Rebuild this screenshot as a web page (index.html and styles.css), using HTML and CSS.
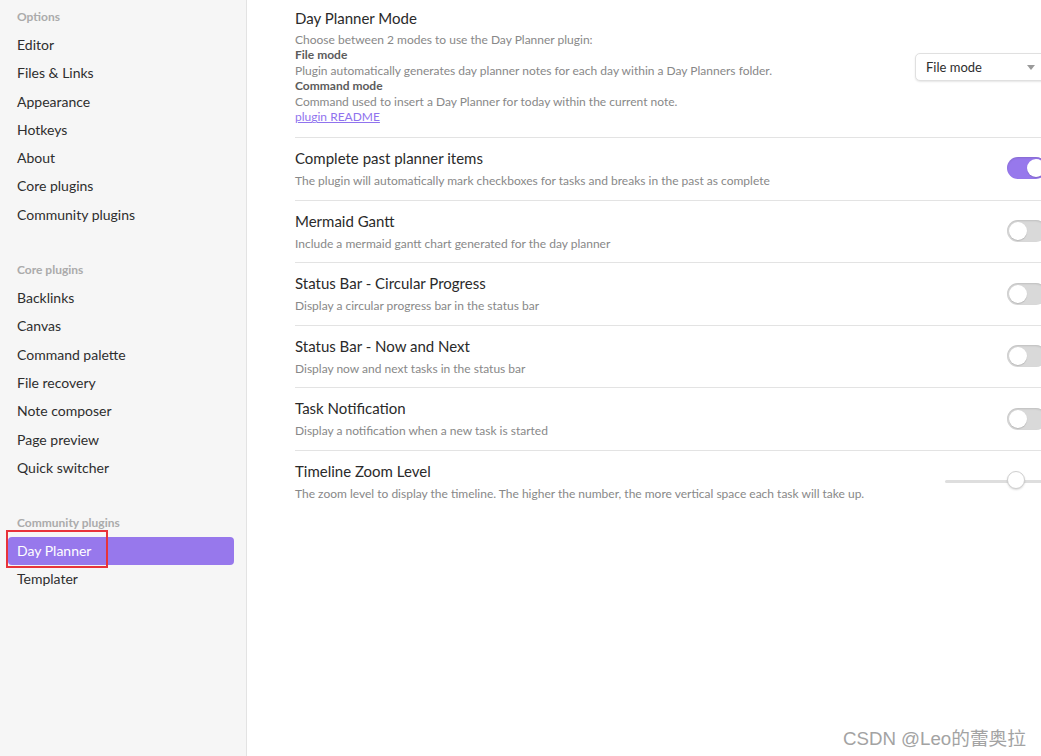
FILE: index.html
```html
<!DOCTYPE html>
<html lang="en">
<head>
  <meta charset="UTF-8">
  <meta name="viewport" content="width=device-width, initial-scale=1.0">
  <title>Settings - Day Planner</title>
  <link rel="stylesheet" href="styles.css">
</head>
<body>
  <div class="sidebar">
    <div class="nav-group">
      <div class="nav-header">Options</div>
      <div class="nav-item">Editor</div>
      <div class="nav-item">Files &amp; Links</div>
      <div class="nav-item">Appearance</div>
      <div class="nav-item">Hotkeys</div>
      <div class="nav-item">About</div>
      <div class="nav-item">Core plugins</div>
      <div class="nav-item">Community plugins</div>
    </div>
    <div class="nav-group">
      <div class="nav-header">Core plugins</div>
      <div class="nav-item">Backlinks</div>
      <div class="nav-item">Canvas</div>
      <div class="nav-item">Command palette</div>
      <div class="nav-item">File recovery</div>
      <div class="nav-item">Note composer</div>
      <div class="nav-item">Page preview</div>
      <div class="nav-item">Quick switcher</div>
    </div>
    <div class="nav-group">
      <div class="nav-header">Community plugins</div>
      <div class="nav-item active">Day Planner<span class="mark"></span></div>
      <div class="nav-item">Templater</div>
    </div>
  </div>

  <div class="main">
    <div class="setting first">
      <div class="info">
        <div class="name">Day Planner Mode</div>
        <div class="desc">
          Choose between 2 modes to use the Day Planner plugin:<br>
          <b>File mode</b><br>
          Plugin automatically generates day planner notes for each day within a Day Planners folder.<br>
          <b>Command mode</b><br>
          Command used to insert a Day Planner for today within the current note.<br>
          <a href="#">plugin README</a>
        </div>
      </div>
      <div class="control">
        <div class="dropdown">File mode<span class="caret"></span></div>
      </div>
    </div>

    <div class="setting">
      <div class="info">
        <div class="name">Complete past planner items</div>
        <div class="desc">The plugin will automatically mark checkboxes for tasks and breaks in the past as complete</div>
      </div>
      <div class="control"><div class="toggle on"><span class="knob"></span></div></div>
    </div>

    <div class="setting">
      <div class="info">
        <div class="name">Mermaid Gantt</div>
        <div class="desc">Include a mermaid gantt chart generated for the day planner</div>
      </div>
      <div class="control"><div class="toggle"><span class="knob"></span></div></div>
    </div>

    <div class="setting">
      <div class="info">
        <div class="name">Status Bar - Circular Progress</div>
        <div class="desc">Display a circular progress bar in the status bar</div>
      </div>
      <div class="control"><div class="toggle"><span class="knob"></span></div></div>
    </div>

    <div class="setting">
      <div class="info">
        <div class="name">Status Bar - Now and Next</div>
        <div class="desc">Display now and next tasks in the status bar</div>
      </div>
      <div class="control"><div class="toggle"><span class="knob"></span></div></div>
    </div>

    <div class="setting">
      <div class="info">
        <div class="name">Task Notification</div>
        <div class="desc">Display a notification when a new task is started</div>
      </div>
      <div class="control"><div class="toggle"><span class="knob"></span></div></div>
    </div>

    <div class="setting">
      <div class="info">
        <div class="name">Timeline Zoom Level</div>
        <div class="desc">The zoom level to display the timeline. The higher the number, the more vertical space each task will take up.</div>
      </div>
      <div class="control">
        <div class="slider"><span class="thumb" style="left: 62px;"></span></div>
      </div>
    </div>
  </div>

  <div class="watermark">CSDN @Leo的蕾奥拉</div>
</body>
</html>
```

FILE: styles.css
```css
body {
  margin: 0;
  padding: 0;
  height: 756px;
  display: flex;
  overflow: hidden;
  font-family: Lato, "Noto Sans", sans-serif;
  color: #2e2e2e;
  background-color: #ffffff;
}
.sidebar {
  flex: none;
  padding: 5px 12px 0 8px;
  box-sizing: content-box;
  width: 226px;
  background-color: #f6f6f6;
  border-right: 1px solid #e3e3e3;
}
.nav-group + .nav-group {
  margin-top: 29px;
}
.nav-header {
  height: 24px;
  line-height: 24px;
  padding-left: 9px;
  margin-bottom: 2px;
  font-size: 12px;
  font-weight: bold;
  color: #ababab;
}
.nav-item {
  position: relative;
  height: 28.3px;
  line-height: 28.3px;
  padding-left: 9px;
  font-size: 14px;
  color: #2e2e2e;
  border-radius: 4px;
}
.nav-item.active {
  background-color: #9778ec;
  color: #ffffff;
}
.nav-item .mark {
  position: absolute;
  left: -2px;
  top: -7px;
  width: 98px;
  height: 34px;
  border: 2px solid #e8333a;
}
.main {
  width: 752px;
  flex: none;
  padding-left: 48px;
}
.setting {
  display: flex;
  align-items: center;
  padding: 10px 0 11px 0;
  border-top: 1px solid #e3e3e3;
}
.setting.first {
  border-top: none;
  padding-top: 8px;
  padding-bottom: 12px;
}
.setting.first .desc {
  margin-top: 3.5px;
}
.info {
  flex: 1;
  margin-right: 20px;
}
.name {
  font-size: 15px;
  line-height: 20px;
  color: #2a2a2a;
}
.desc {
  margin-top: 5px;
  font-size: 12px;
  line-height: 15.6px;
  color: #888888;
}
.desc b {
  color: #5c5c5c;
  font-weight: bold;
}
.desc a {
  color: #9073ee;
  text-decoration: underline;
}
.control {
  flex: none;
  display: flex;
  justify-content: flex-end;
}
.dropdown {
  position: relative;
  height: 26px;
  line-height: 26px;
  padding-left: 10px;
  box-sizing: content-box;
  width: 120px;
  font-size: 13px;
  color: #2e2e2e;
  border: 1px solid #e0e0e0;
  border-radius: 5px;
  box-shadow: 0 1px 2px rgba(0, 0, 0, 0.1);
  background: #ffffff;
}
.caret {
  position: absolute;
  right: 11px;
  top: 11px;
  border-left: 4px solid transparent;
  border-right: 4px solid transparent;
  border-top: 5px solid #9a9a9a;
}
.toggle {
  position: relative;
  width: 40px;
  height: 22px;
  border-radius: 11px;
  background-color: #d9d9d9;
  box-shadow: inset 0 1px 2px rgba(0, 0, 0, 0.12);
}
.toggle .knob {
  position: absolute;
  left: 2px;
  top: 2px;
  width: 18px;
  height: 18px;
  border-radius: 50%;
  background: #ffffff;
  box-shadow: 0 1px 1px rgba(0, 0, 0, 0.15);
}
.toggle.on {
  background-color: #9778ec;
}
.toggle.on .knob {
  left: 20px;
}
.slider {
  position: relative;
  width: 102px;
  height: 3px;
  margin: 9px 0;
  border-radius: 2px;
  background-color: #dedede;
}
.slider .thumb {
  position: absolute;
  top: -9px;
  width: 18px;
  height: 18px;
  box-sizing: border-box;
  border-radius: 50%;
  background: #ffffff;
  border: 1px solid #cfcfcf;
  box-shadow: 0 1px 2px rgba(0, 0, 0, 0.15);
}
.watermark {
  position: absolute;
  right: 15px;
  bottom: 6px;
  font-family: "Liberation Sans", "Noto Sans CJK SC", sans-serif;
  font-size: 18.7px;
  color: #a3a3a3;
}
```
